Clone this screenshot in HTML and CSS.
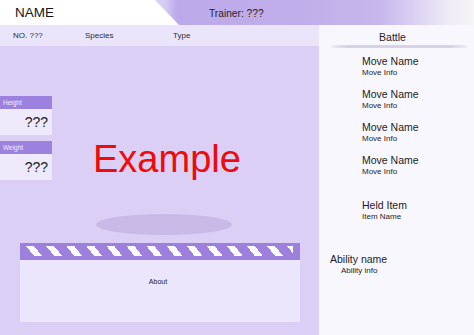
FILE: index.html
```html
<!DOCTYPE html>
<html>
<head>
<meta charset="utf-8">
<link rel="stylesheet" href="styles.css">
</head>
<body>
<div class="page">
  <div class="header">
    <div class="name">NAME</div>
    <div class="trainer">Trainer: ???</div>
  </div>
  <div class="content">
    <div class="left">
      <div class="info">
        <span>NO. ???</span>
        <span>Species</span>
        <span>Type</span>
      </div>
      <div class="main">
        <div class="top">
          <div class="stats">
            <div class="stat-label">Height</div>
            <div class="stat-value">???</div>
            <div class="stat-label stat-gap">Weight</div>
            <div class="stat-value">???</div>
          </div>
          <div class="example">Example</div>
        </div>
        <div class="shadow"></div>
        <div class="about">
          <div class="about-bar"><div class="stripes"></div></div>
          <div class="about-body">About</div>
        </div>
      </div>
    </div>
    <div class="right">
      <div class="battle">Battle</div>
      <div class="divider"></div>
      <div class="moves">
        <div class="move"><div class="big">Move Name</div><div class="small">Move Info</div></div>
        <div class="move"><div class="big">Move Name</div><div class="small">Move Info</div></div>
        <div class="move"><div class="big">Move Name</div><div class="small">Move Info</div></div>
        <div class="move"><div class="big">Move Name</div><div class="small">Move Info</div></div>
        <div class="move held"><div class="big">Held Item</div><div class="small">Item Name</div></div>
      </div>
      <div class="ability">
        <div class="big">Ability name</div>
        <div class="small indent">Ability info</div>
      </div>
    </div>
  </div>
</div>
</body>
</html>
```
FILE: styles.css
```css
* { box-sizing: border-box; }
html, body {
  margin: 0;
  padding: 0;
  width: 474px;
  height: 335px;
  overflow: hidden;
  background: #fff;
  font-family: "Liberation Sans", Arial, sans-serif;
  color: #1a1a22;
}
.page {
  display: flex;
  flex-direction: column;
  width: 474px;
  height: 335px;
}
.header {
  height: 25px;
  display: flex;
  background: #fff;
}
.name {
  width: 155px;
  padding-left: 15px;
  padding-top: 1px;
  font-size: 13.5px;
  line-height: 24px;
  color: #15151c;
}
.trainer {
  flex: 1;
  clip-path: polygon(0 0, 100% 0, 100% 100%, 24px 100%);
  background: linear-gradient(to right, #ddd3f6 0, #d6caf3 10px, #bca9e9 22px, #c0aeea 45%, #c6b6ec 70%, #dcd2f3 82%, #eeebf5 92%, #f6f5f8 100%);
  padding-left: 54px;
  padding-top: 2px;
  font-size: 10.2px;
  line-height: 23px;
  color: #22222c;
}
.content {
  flex: 1;
  display: flex;
}
.left {
  width: 319px;
  display: flex;
  flex-direction: column;
}
.info {
  height: 21px;
  background: #ebe5fb;
  display: grid;
  grid-template-columns: 72px 88px auto;
  align-items: center;
  padding-left: 13px;
  font-size: 8px;
  color: #2a2a33;
}
.main {
  flex: 1;
  background: #dccff6;
  padding-top: 50px;
  display: flex;
  flex-direction: column;
}
.top {
  display: flex;
  align-items: flex-start;
}
.stats {
  width: 52px;
  display: flex;
  flex-direction: column;
}
.stat-label {
  height: 13px;
  background: #9d81de;
  color: #f3efff;
  font-size: 6.5px;
  line-height: 13px;
  padding-left: 3px;
}
.stat-gap { margin-top: 6px; }
.stat-value {
  height: 26px;
  background: #eee9fb;
  font-size: 14px;
  line-height: 26px;
  text-align: right;
  padding-right: 4px;
  color: #22222a;
}
.example {
  margin-left: 41px;
  margin-top: 41px;
  font-size: 38px;
  line-height: 44px;
  color: #f20a0a;
}
.shadow {
  margin-top: 33px;
  margin-left: 96px;
  width: 136px;
  height: 21px;
  border-radius: 50%;
  background: #c8b9e7;
}
.about {
  margin-top: 8px;
  margin-left: 20px;
  width: 280px;
}
.about-bar {
  height: 17px;
  background: #9d80dd;
  padding: 3px 7px 4px 2px;
}
.stripes {
  height: 10px;
  background: repeating-linear-gradient(51deg, #9d80dd 0 9.4px, #fbfaff 9.4px 15.6px);
}
.about-body {
  height: 62px;
  background: #ece6fc;
  text-align: center;
  font-size: 7px;
  padding-top: 18px;
  padding-right: 4px;
  color: #222;
}
.right {
  flex: 1;
  background: #f8f7fd;
  padding-top: 6px;
}
.battle {
  text-align: center;
  padding-right: 8px;
  font-size: 10.5px;
  color: #24242c;
}
.divider {
  margin: 2px 7px 0 12px;
  height: 3px;
  border-radius: 2px;
  background: linear-gradient(to right, rgba(214,208,230,0.3), #d7d2e6 12%, #d7d2e6 88%, rgba(214,208,230,0.3));
}
.moves {
  margin-top: 7px;
  padding-left: 43px;
  display: flex;
  flex-direction: column;
  gap: 10px;
}
.big {
  font-size: 10.5px;
  line-height: 13px;
  color: #1c1c24;
}
.small {
  font-size: 8px;
  line-height: 10px;
  color: #24242c;
}
.held { margin-top: 12px; }
.ability {
  margin-top: 31px;
  padding-left: 11px;
}
.indent { padding-left: 11px; }
```
